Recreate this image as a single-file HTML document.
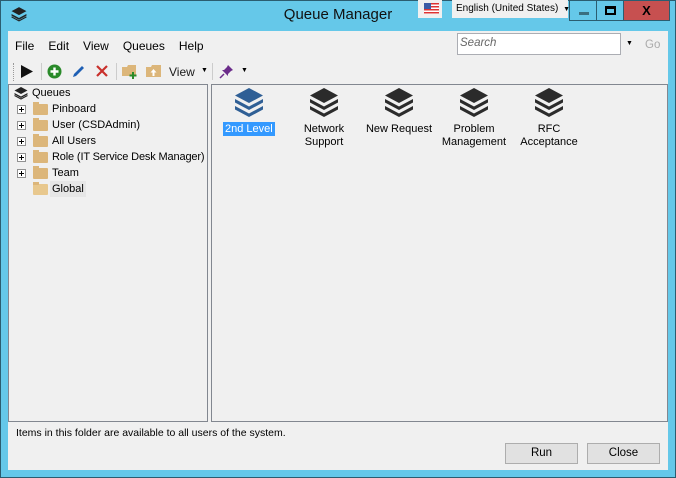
<!DOCTYPE html>
<html><head><meta charset="utf-8"><style>
*{margin:0;padding:0;box-sizing:border-box}
body{width:676px;height:478px;overflow:hidden;background:#65c8e9;font-family:"Liberation Sans",sans-serif;font-size:11.5px;color:#000;position:relative}
.win{position:absolute;left:0;top:0;width:676px;height:478px;border:1px solid #2b5d70}
.abs{position:absolute}
.client{position:absolute;left:8px;top:31px;width:660px;height:439px;background:#f0f0f0}
.pane{position:absolute;background:#f0f0f0;border:1px solid #828790}
.menu span{margin-right:14px}
.tree{font-size:11px}
.tree div{position:absolute;left:0;height:16px;line-height:16px;white-space:nowrap}
.plus{position:absolute;width:9px;height:9px;border:1px solid #919191;background:#fff;left:8px;top:4px}
.plus:before{content:"";position:absolute;left:1px;top:3px;width:5px;height:1px;background:#000}
.plus:after{content:"";position:absolute;left:3px;top:1px;width:1px;height:5px;background:#000}
.fold{position:absolute;left:24px;top:3px;width:15px;height:11px;background:#dcb67a;border-radius:1px}
.fold:before{content:"";position:absolute;left:0;top:-2px;width:6px;height:3px;background:#dcb67a}
.item{position:absolute;text-align:center;width:80px;line-height:13px;font-size:11px}
.btn{position:absolute;top:443px;width:57px;height:21px;background:#e1e1e1;border:1px solid #adadad;text-align:center;line-height:19px;font-size:11.5px}
</style></head><body>
<div class="win"></div>
<svg class="abs" style="left:11px;top:6px" width="16" height="16" viewBox="0 0 28 26"><path d="M14 1 L27 8 L14 15 L1 8Z" fill="#222"/><path d="M1 13 L14 20 L27 13 L27 16 L14 23 L1 16Z" fill="#222"/><path d="M1 18 L14 25 L27 18" fill="none" stroke="#222" stroke-width="2"/></svg>
<div class="abs" style="left:0;width:676px;top:6px;text-align:center;font-size:15px;color:#111">Queue Manager</div>
<div class="abs" style="left:418px;top:0;width:24px;height:18px;background:#f0f0f0"></div>
<svg class="abs" style="left:424px;top:3px" width="15" height="11"><rect width="15" height="11" fill="#fff"/><g fill="#d33"><rect y="0" width="15" height="1.5"/><rect y="3" width="15" height="1.5"/><rect y="6" width="15" height="1.5"/><rect y="9" width="15" height="1.5"/></g><rect width="7" height="6" fill="#3b5ba5"/></svg>
<div class="abs" style="left:452px;top:0;width:116px;height:18px;background:#f0f0f0;font-size:10px;line-height:18px;padding-left:4px;white-space:nowrap">English (United States) <span style="font-size:7px;margin-left:2px">▼</span></div>
<div class="abs" style="left:569px;top:0;width:28px;height:21px;border:1px solid #2b5d70;background:#65c8e9"><div class="abs" style="left:9px;top:11px;width:10px;height:3px;background:#3a6f80"></div></div>
<div class="abs" style="left:596px;top:0;width:28px;height:21px;border:1px solid #2b5d70;background:#65c8e9"><div class="abs" style="left:8px;top:5px;width:11px;height:9px;border:2px solid #000;border-top-width:3px"></div></div>
<div class="abs" style="left:623px;top:0;width:47px;height:21px;border:1px solid #2b5d70;background:#c75050;text-align:center;font-weight:bold;font-size:13px;line-height:19px">X</div>
<div class="client"></div>
<div class="abs menu" style="left:15px;top:39px;font-size:12px"><span>File</span><span>Edit</span><span>View</span><span>Queues</span><span>Help</span></div>
<div class="abs" style="left:457px;top:33px;width:164px;height:22px;background:#fff;border:1px solid #abadb3;font-style:italic;color:#666;padding:3px 2px">Search</div>
<div class="abs" style="left:626px;top:40px;font-size:7px">▼</div>
<div class="abs" style="left:645px;top:39px;color:#aaa">Go</div>
<div class="abs" style="left:13px;top:63px;width:1px;height:18px;border-left:1px dotted #999"></div>
<svg class="abs" style="left:20px;top:64px" width="14" height="15"><path d="M1 1 L13 7.5 L1 14Z" fill="#111"/></svg>
<div class="abs" style="left:41px;top:63px;width:1px;height:17px;background:#ccc"></div>
<svg class="abs" style="left:47px;top:64px" width="15" height="15"><circle cx="7.5" cy="7.5" r="7" fill="#2a8a2a"/><path d="M7.5 3.5V11.5M3.5 7.5H11.5" stroke="#fff" stroke-width="2.4"/></svg>
<svg class="abs" style="left:71px;top:64px" width="15" height="15"><path d="M2 13 L3 10 L11 2 L13 4 L5 12Z" fill="#1e5fb4"/></svg>
<svg class="abs" style="left:95px;top:64px" width="14" height="14"><path d="M2 2L12 12M12 2L2 12" stroke="#c9302c" stroke-width="2.2"/></svg>
<div class="abs" style="left:116px;top:63px;width:1px;height:17px;background:#ccc"></div>
<svg class="abs" style="left:122px;top:64px" width="17" height="15"><path d="M0 3H5L6 1H14V12H0Z" fill="#dcb67a"/><path d="M11 8V15M7.5 11.5H14.5" stroke="#2a8a2a" stroke-width="2"/></svg>
<svg class="abs" style="left:146px;top:65px" width="16" height="13"><path d="M0 2H5L6 0H15V12H0Z" fill="#dcb67a"/><path d="M7.5 4L4.5 7.5H6.5V11H8.5V7.5H10.5Z" fill="#fff"/></svg>
<div class="abs" style="left:169px;top:65px;color:#1a1a1a;font-size:12px">View</div>
<div class="abs" style="left:201px;top:67px;font-size:7px">▼</div>
<div class="abs" style="left:212px;top:63px;width:1px;height:17px;background:#ccc"></div>
<svg class="abs" style="left:219px;top:64px" width="15" height="15"><path d="M9 1L14 6L12 7L9 10L9 12L3 6L5 6L8 3Z" fill="#6b2c8a"/><path d="M5 10L1 14" stroke="#6b2c8a" stroke-width="1.5"/></svg>
<div class="abs" style="left:241px;top:67px;font-size:7px">▼</div>
<div class="pane" style="left:8px;top:84px;width:200px;height:338px"></div>
<div class="pane" style="left:211px;top:84px;width:457px;height:338px"></div>
<div class="abs tree" style="left:9px;top:85px;width:198px">
<div style="top:0"><svg class="abs" style="left:5px;top:1px" width="14" height="14" viewBox="0 0 28 26"><path d="M14 1 L27 8 L14 15 L1 8Z" fill="#222"/><path d="M1 13 L14 20 L27 13 L27 16 L14 23 L1 16Z" fill="#222"/><path d="M1 18 L14 25 L27 18" fill="none" stroke="#222" stroke-width="2"/></svg><span style="position:absolute;left:23px">Queues</span></div>
<div style="top:16px;width:198px"><i class="plus"></i><i class="fold"></i><span style="position:absolute;left:43px">Pinboard</span></div>
<div style="top:32px;width:198px"><i class="plus"></i><i class="fold"></i><span style="position:absolute;left:43px">User (CSDAdmin)</span></div>
<div style="top:48px;width:198px"><i class="plus"></i><i class="fold"></i><span style="position:absolute;left:43px">All Users</span></div>
<div style="top:64px;width:198px"><i class="plus"></i><i class="fold"></i><span style="position:absolute;left:43px;letter-spacing:-0.15px">Role (IT Service Desk Manager)</span></div>
<div style="top:80px;width:198px"><i class="plus"></i><i class="fold"></i><span style="position:absolute;left:43px">Team</span></div>
<div style="top:96px;width:198px"><i class="fold" style="background:#e8c88e"></i><span style="position:absolute;left:41px;padding:0 2px;background:#e6e6e6">Global</span></div>
</div>
<svg width="0" height="0" style="position:absolute"><defs><g id="st"><path d="M14 0 L28 7.5 L14 15 L0 7.5Z"/><path d="M0 11 L14 18.5 L28 11 L28 14.5 L14 22 L0 14.5Z"/><path d="M0 18 L14 25.5 L28 18 L28 21.5 L14 29 L0 21.5Z"/></g></defs></svg>
<svg class="abs" style="left:235px;top:88px" width="28" height="29"><use href="#st" fill="#2f5f95"/></svg>
<svg class="abs" style="left:310px;top:88px" width="28" height="29"><use href="#st" fill="#2b2b2b"/></svg>
<svg class="abs" style="left:385px;top:88px" width="28" height="29"><use href="#st" fill="#2b2b2b"/></svg>
<svg class="abs" style="left:460px;top:88px" width="28" height="29"><use href="#st" fill="#2b2b2b"/></svg>
<svg class="abs" style="left:535px;top:88px" width="28" height="29"><use href="#st" fill="#2b2b2b"/></svg>
<div class="abs" style="left:223px;top:122px;background:#3399ff;color:#fff;padding:0 2px;line-height:14px;font-size:11px">2nd Level</div>
<div class="item" style="left:284px;top:123px">Network<br>Support</div>
<div class="item" style="left:359px;top:123px">New Request</div>
<div class="item" style="left:434px;top:123px">Problem<br>Management</div>
<div class="item" style="left:509px;top:123px">RFC<br>Acceptance</div>
<div class="abs" style="left:16px;top:427px;font-size:10.5px">Items in this folder are available to all users of the system.</div>
<div class="btn" style="left:505px;width:73px">Run</div>
<div class="btn" style="left:587px;width:73px">Close</div>
</body></html>
